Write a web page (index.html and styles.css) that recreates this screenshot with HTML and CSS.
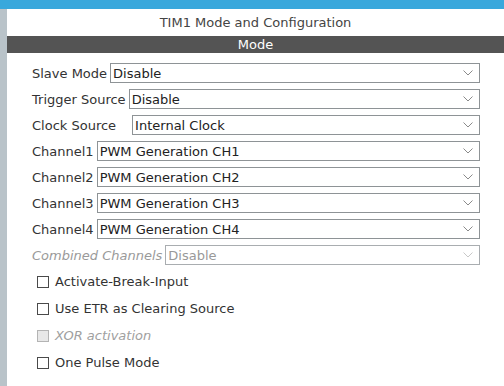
FILE: index.html
```html
<!DOCTYPE html>
<html lang="en">
<head>
    <meta charset="UTF-8">
    <title>TIM1 Mode and Configuration</title>
    <link rel="stylesheet" href="styles.css">
</head>
<body>
    <div class="topbar"></div>
    <div class="frame">
        <div class="side"></div>
        <div class="main">
            <div class="title">TIM1 Mode and Configuration</div>
            <div class="section">Mode</div>

            <div class="form">
                <div class="row">
                    <span class="label">Slave Mode</span>
                    <div class="combo"><span>Disable</span><svg class="chev" width="10" height="6" viewBox="0 0 10 6"><path d="M0.5 0.5 L5 5 L9.5 0.5" /></svg></div>
                </div>
                <div class="row">
                    <span class="label">Trigger Source</span>
                    <div class="combo"><span>Disable</span><svg class="chev" width="10" height="6" viewBox="0 0 10 6"><path d="M0.5 0.5 L5 5 L9.5 0.5" /></svg></div>
                </div>
                <div class="row">
                    <span class="label clock">Clock Source</span>
                    <div class="combo"><span>Internal Clock</span><svg class="chev" width="10" height="6" viewBox="0 0 10 6"><path d="M0.5 0.5 L5 5 L9.5 0.5" /></svg></div>
                </div>
                <div class="row">
                    <span class="label">Channel1</span>
                    <div class="combo"><span>PWM Generation CH1</span><svg class="chev" width="10" height="6" viewBox="0 0 10 6"><path d="M0.5 0.5 L5 5 L9.5 0.5" /></svg></div>
                </div>
                <div class="row">
                    <span class="label">Channel2</span>
                    <div class="combo"><span>PWM Generation CH2</span><svg class="chev" width="10" height="6" viewBox="0 0 10 6"><path d="M0.5 0.5 L5 5 L9.5 0.5" /></svg></div>
                </div>
                <div class="row">
                    <span class="label">Channel3</span>
                    <div class="combo"><span>PWM Generation CH3</span><svg class="chev" width="10" height="6" viewBox="0 0 10 6"><path d="M0.5 0.5 L5 5 L9.5 0.5" /></svg></div>
                </div>
                <div class="row">
                    <span class="label">Channel4</span>
                    <div class="combo"><span>PWM Generation CH4</span><svg class="chev" width="10" height="6" viewBox="0 0 10 6"><path d="M0.5 0.5 L5 5 L9.5 0.5" /></svg></div>
                </div>
                <div class="row disabled">
                    <span class="label">Combined Channels</span>
                    <div class="combo"><span>Disable</span><svg class="chev" width="10" height="6" viewBox="0 0 10 6"><path d="M0.5 0.5 L5 5 L9.5 0.5" /></svg></div>
                </div>
            </div>

            <div class="checks">
                <div class="check"><span class="box"></span>Activate-Break-Input</div>
                <div class="check"><span class="box"></span>Use ETR as Clearing Source</div>
                <div class="check disabled"><span class="box"></span>XOR activation</div>
                <div class="check"><span class="box"></span>One Pulse Mode</div>
            </div>
        </div>
    </div>
</body>
</html>
```

FILE: styles.css
```css
html, body {
    margin: 0;
    padding: 0;
    height: 100%;
    background: #ffffff;
}
body {
    font-family: "DejaVu Sans", Verdana, sans-serif;
    font-size: 13px;
    color: #333333;
    display: flex;
    flex-direction: column;
}
.topbar {
    height: 9px;
    background: #39a8dc;
}
.frame {
    flex: 1;
    display: flex;
}
.side {
    width: 7px;
    background: #b9c3c9;
}
.main {
    flex: 1;
}
.title {
    height: 27px;
    line-height: 27px;
    text-align: center;
    color: #444444;
}
.section {
    height: 17px;
    line-height: 17px;
    background: #545454;
    color: #ffffff;
    text-align: center;
}
.form {
    padding: 10px 24px 0 25px;
    display: flex;
    flex-direction: column;
    gap: 6px;
}
.row {
    display: flex;
    align-items: center;
    height: 20px;
}
.label {
    white-space: nowrap;
    margin-right: 3px;
}
.label.clock {
    margin-right: 16px;
}
.combo {
    flex: 1;
    height: 18px;
    border: 1px solid #8e9396;
    display: flex;
    align-items: center;
    justify-content: space-between;
    padding: 0 5px 0 2px;
    color: #222222;
}
.chev {
    margin-right: 1px;
}
.chev path {
    fill: none;
    stroke: #8a8a8a;
    stroke-width: 1;
}
.row.disabled .label {
    font-style: italic;
    color: #9a9a9a;
}
.row.disabled .combo {
    color: #999999;
    border-color: #a9adb0;
}
.row.disabled .chev path {
    stroke: #c8c8c8;
}
.checks {
    padding: 3px 0 0 30px;
}
.check {
    display: flex;
    align-items: center;
    height: 27px;
}
.box {
    width: 10px;
    height: 10px;
    border: 1px solid #4a4a4a;
    margin-right: 6px;
    background: #ffffff;
}
.check.disabled {
    font-style: italic;
    color: #a0a0a0;
}
.check.disabled .box {
    border-color: #b4b4b4;
    background: #e8e8e8;
}
```
